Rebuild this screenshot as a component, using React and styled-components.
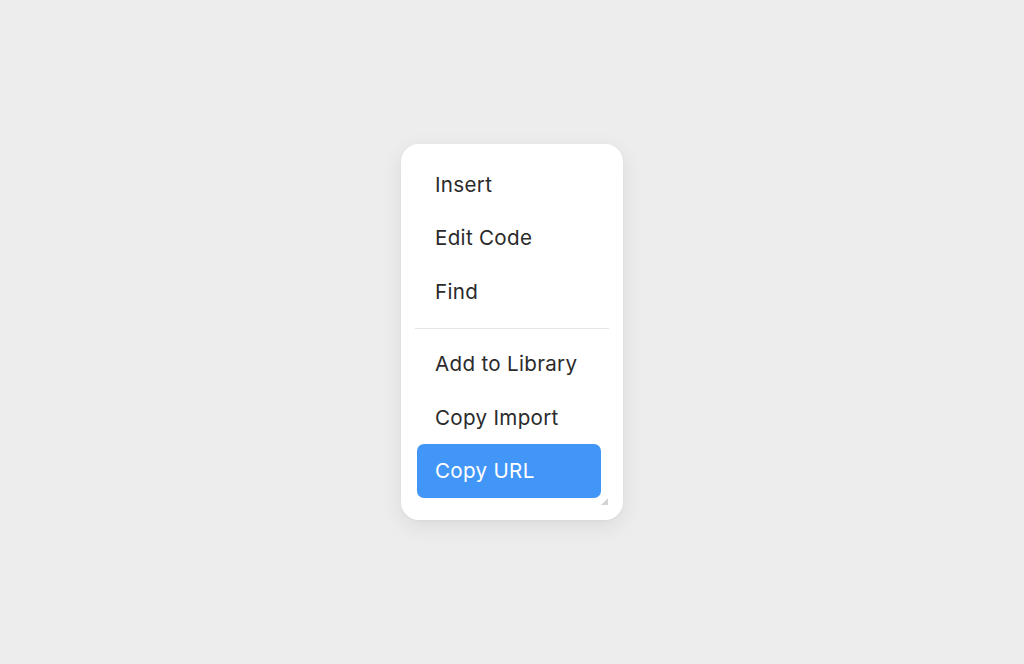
import React from "react";
import styled, { createGlobalStyle } from "styled-components";

const Global = createGlobalStyle`
    html, body {
        margin: 0;
        padding: 0;
        background: #ededed;
        font-family: Inter, "Noto Sans", sans-serif;
    }
`

const groups = [
    ["Insert", "Edit Code", "Find"],
    ["Add to Library", "Copy Import", "Copy URL"],
];

const App = () => {
    const active = "Copy URL";
    return (
        <Page>
            <Global />
            <Menu>
                <Scroll>
                    {groups.map((group, i) => (
                        <React.Fragment key={i}>
                            {i > 0 && <Divider />}
                            {group.map(label => (
                                <Item key={label} active={label === active ? "true" : undefined}>
                                    {label}
                                </Item>
                            ))}
                        </React.Fragment>
                    ))}
                </Scroll>
                <Grip />
            </Menu>
        </Page>
    );
}

export default App;

const Page = styled.div`
    width: 1024px;
    height: 664px;
    display: flex;
    justify-content: center;
    align-items: flex-start;
    padding-top: 144px;
    box-sizing: border-box;
`
const Menu = styled.div`
    position: relative;
    width: 222px;
    height: 376px;
    box-sizing: border-box;
    padding: 13.5px 14px 22px 14px;
    background: #fff;
    border-radius: 18px;
    box-shadow: 0 6px 22px rgba(0, 0, 0, 0.08), 0 1px 3px rgba(0, 0, 0, 0.04);
`
const Scroll = styled.div`
    display: flex;
    flex-direction: column;
`
const Item = styled.div`
    height: 53.5px;
    margin: 0 8px 0 2px;
    padding-left: 18px;
    display: flex;
    align-items: center;
    border-radius: 7px;
    font-size: 20.6px;
    letter-spacing: 0.3px;
    color: ${props => props.active ? "#fff" : "#2b2b2b"};
    background: ${props => props.active ? "#4196f8" : "transparent"};
`
const Divider = styled.div`
    height: 1px;
    background: #e6e6e6;
    margin: 9.5px 0 8.5px;
`
const Grip = styled.div`
    position: absolute;
    right: 15px;
    bottom: 15px;
    width: 0;
    height: 0;
    border-left: 7px solid transparent;
    border-bottom: 7px solid #d4d4d4;
`
